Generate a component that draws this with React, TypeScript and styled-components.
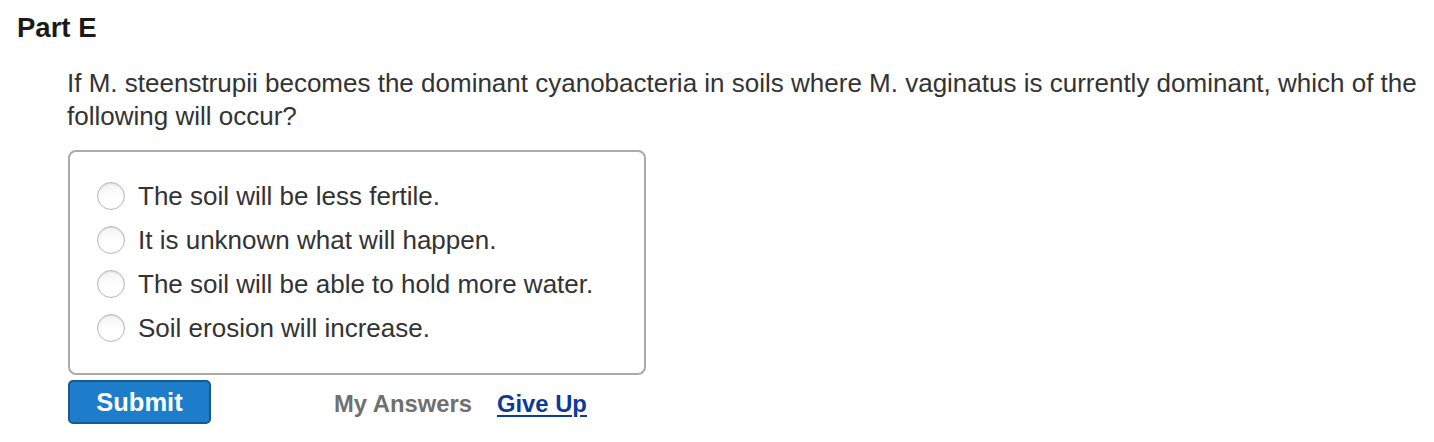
import React, { useState } from "react";
import styled, { createGlobalStyle } from "styled-components";

const GlobalStyle = createGlobalStyle`
  html, body {
    margin: 0;
    padding: 0;
    background: #ffffff;
  }
  body {
    font-family: "Liberation Sans", Arial, sans-serif;
    color: #333333;
  }
`;

const Page = styled.div`
  padding: 13px 17px 0 17px;
`;

const Title = styled.h2`
  margin: 0;
  font-size: 27.5px;
  font-weight: bold;
  color: #1a1a1a;
  line-height: 30px;
`;

const Body = styled.div`
  padding-left: 50px;
  padding-top: 24px;
`;

const Question = styled.p`
  margin: 0;
  font-size: 26px;
  line-height: 33px;
  color: #333333;
`;

const ChoiceBox = styled.div`
  box-sizing: border-box;
  margin-top: 17px;
  margin-left: 1px;
  width: 578px;
  height: 225px;
  border: 2px solid #aaaaaa;
  border-radius: 8px;
  padding: 22px 0 0 27px;
  display: flex;
  flex-direction: column;
`;

const Choice = styled.label`
  display: flex;
  align-items: center;
  gap: 13px;
  height: 44px;
  font-size: 26px;
  color: #333333;
  cursor: pointer;
`;

const Radio = styled.span<{ $checked: boolean }>`
  box-sizing: border-box;
  width: 28px;
  height: 28px;
  border-radius: 50%;
  border: 1.5px solid #b8b8b8;
  background: linear-gradient(#f4f4f4, #ffffff 60%);
  box-shadow: inset 0 1px 2px rgba(0, 0, 0, 0.12);
  display: flex;
  align-items: center;
  justify-content: center;
  flex-shrink: 0;

  &::after {
    content: "";
    width: 12px;
    height: 12px;
    border-radius: 50%;
    background: #333;
    display: ${(p) => (p.$checked ? "block" : "none")};
  }
`;

const Actions = styled.div`
  display: flex;
  align-items: center;
  margin-top: 5px;
  margin-left: 1px;
`;

const SubmitButton = styled.button`
  box-sizing: border-box;
  width: 143px;
  height: 44px;
  background: #1e7dcb;
  border: 2px solid #175a91;
  border-radius: 5px;
  color: #ffffff;
  font-family: "Liberation Sans", Arial, sans-serif;
  font-weight: bold;
  font-size: 25.5px;
  padding: 0;
  cursor: pointer;
`;

const TextLink = styled.a<{ $muted?: boolean }>`
  font-weight: bold;
  font-size: 23.8px;
  padding-top: 3px;
  color: ${(p) => (p.$muted ? "#707070" : "#0b3a98")};
  text-decoration: ${(p) => (p.$muted ? "none" : "underline")};
  text-underline-offset: 3px;
  margin-left: ${(p) => (p.$muted ? "123px" : "25px")};
  cursor: pointer;
`;

const options = [
  "The soil will be less fertile.",
  "It is unknown what will happen.",
  "The soil will be able to hold more water.",
  "Soil erosion will increase.",
];

export default function App() {
  const [selected, setSelected] = useState<number | null>(null);

  return (
    <Page>
      <GlobalStyle />
      <Title>Part E</Title>
      <Body>
        <Question>
          If M. steenstrupii becomes the dominant cyanobacteria in soils where M.
          vaginatus is currently dominant, which of the following will occur?
        </Question>
        <ChoiceBox>
          {options.map((text, i) => (
            <Choice key={text} onClick={() => setSelected(i)}>
              <Radio $checked={selected === i} />
              {text}
            </Choice>
          ))}
        </ChoiceBox>
        <Actions>
          <SubmitButton>Submit</SubmitButton>
          <TextLink $muted>My Answers</TextLink>
          <TextLink>Give Up</TextLink>
        </Actions>
      </Body>
    </Page>
  );
}
